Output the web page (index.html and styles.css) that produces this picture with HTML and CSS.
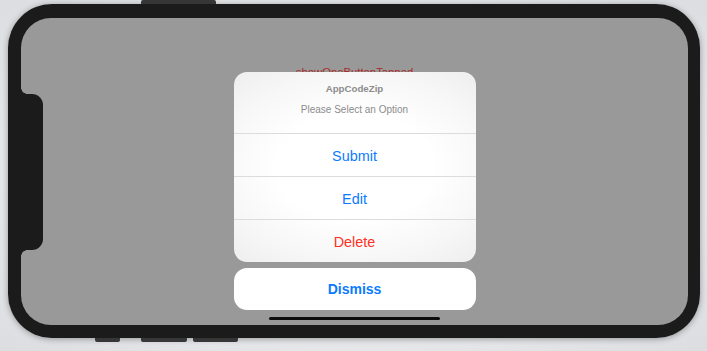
FILE: index.html
```html
<!DOCTYPE html>
<html lang="en">
    <head>
        <meta charset="UTF-8" />
        <meta name="viewport" content="width=device-width, initial-scale=1.0" />
        <title>Action Sheet</title>
        <link rel="stylesheet" href="styles.css">
    </head>
    <body>
        <div class="phone">
            <span class="side-btn top-btn"></span>
            <span class="side-btn bottom-btn b1"></span>
            <span class="side-btn bottom-btn b2"></span>
            <span class="side-btn bottom-btn b3"></span>
            <div class="screen">
                <div class="notch"></div>
                <div class="content">
                    <p class="status-label">showOneButtonTapped</p>
                </div>
                <div class="overlay">
                    <div class="sheet">
                        <div class="alert-group">
                            <div class="alert-header">
                                <div class="alert-title">AppCodeZip</div>
                                <div class="alert-message">Please Select an Option</div>
                            </div>
                            <div class="action">Submit</div>
                            <div class="action">Edit</div>
                            <div class="action destructive">Delete</div>
                        </div>
                        <div class="cancel">Dismiss</div>
                    </div>
                    <div class="home-indicator"></div>
                </div>
            </div>
        </div>
    </body>
</html>
```

FILE: styles.css
```css
body {
    margin: 0;
    padding: 4px 7px 0 8px;
    font-family: "Liberation Sans", Arial, sans-serif;
    background: radial-gradient(ellipse at center, #eeeff1 40%, #dcdde0 100%);
    height: 351px;
    box-sizing: border-box;
    overflow: hidden;
}

.phone {
    position: relative;
    width: 692px;
    height: 334px;
    box-sizing: border-box;
    padding: 14px 12px 13px 13px;
    background-color: #1b1b1b;
    border-radius: 44px;
    box-shadow: 0 1px 6px rgba(0, 0, 0, 0.35);
}

.side-btn {
    position: absolute;
    height: 4px;
    background-color: #363636;
}

.top-btn {
    top: -4px;
    left: 133px;
    width: 75px;
    border-radius: 2px 2px 0 0;
}

.bottom-btn {
    bottom: -4px;
    border-radius: 0 0 2px 2px;
}

.b1 { left: 87px; width: 25px; }
.b2 { left: 133px; width: 46px; }
.b3 { left: 185px; width: 45px; }

.screen {
    position: relative;
    display: grid;
    height: 100%;
    background-color: #999999;
    border-radius: 30px;
    overflow: hidden;
}

.notch {
    position: absolute;
    left: 0;
    top: 76px;
    width: 22px;
    height: 156px;
    background-color: #1b1b1b;
    border-radius: 0 11px 11px 0;
    z-index: 2;
}

.notch::before,
.notch::after {
    content: "";
    position: absolute;
    left: 0;
    width: 6px;
    height: 6px;
}

.notch::before {
    top: -6px;
    background: radial-gradient(circle at 100% 0, transparent 5.5px, #1b1b1b 6px);
}

.notch::after {
    bottom: -6px;
    background: radial-gradient(circle at 100% 100%, transparent 5.5px, #1b1b1b 6px);
}

.content,
.overlay {
    grid-area: 1 / 1;
}

.content {
    display: flex;
    justify-content: center;
}

.status-label {
    margin: 48px 0 0;
    font-size: 11.3px;
    color: #a82c2a;
}

.overlay {
    display: flex;
    flex-direction: column;
    align-items: center;
    padding-top: 54px;
}

.sheet {
    width: 242px;
    display: flex;
    flex-direction: column;
    gap: 6px;
}

.alert-group {
    border-radius: 13px;
    overflow: hidden;
    background: radial-gradient(ellipse 72% 62% at 50% 50%, #ffffff 45%, #f8f7f7 78%, #f0f0f0 100%);
}

.alert-header {
    height: 61px;
    box-sizing: border-box;
    padding-top: 11px;
    text-align: center;
    color: #8c8c8c;
}

.alert-title {
    font-size: 9.7px;
    font-weight: bold;
    line-height: 12px;
}

.alert-message {
    margin-top: 9px;
    font-size: 10px;
    line-height: 12px;
}

.action {
    height: 43px;
    box-sizing: border-box;
    padding-top: 2px;
    border-top: 1px solid #dddcdc;
    display: flex;
    align-items: center;
    justify-content: center;
    font-size: 14.4px;
    color: #0a7bff;
}

.action.destructive {
    color: #ff2f24;
}

.cancel {
    height: 42px;
    border-radius: 13px;
    background-color: #ffffff;
    display: flex;
    align-items: center;
    justify-content: center;
    font-size: 14px;
    font-weight: bold;
    color: #0a7bff;
}

.home-indicator {
    width: 171px;
    height: 3px;
    margin-top: 7px;
    border-radius: 2px;
    background-color: #0d0d0d;
}
```
